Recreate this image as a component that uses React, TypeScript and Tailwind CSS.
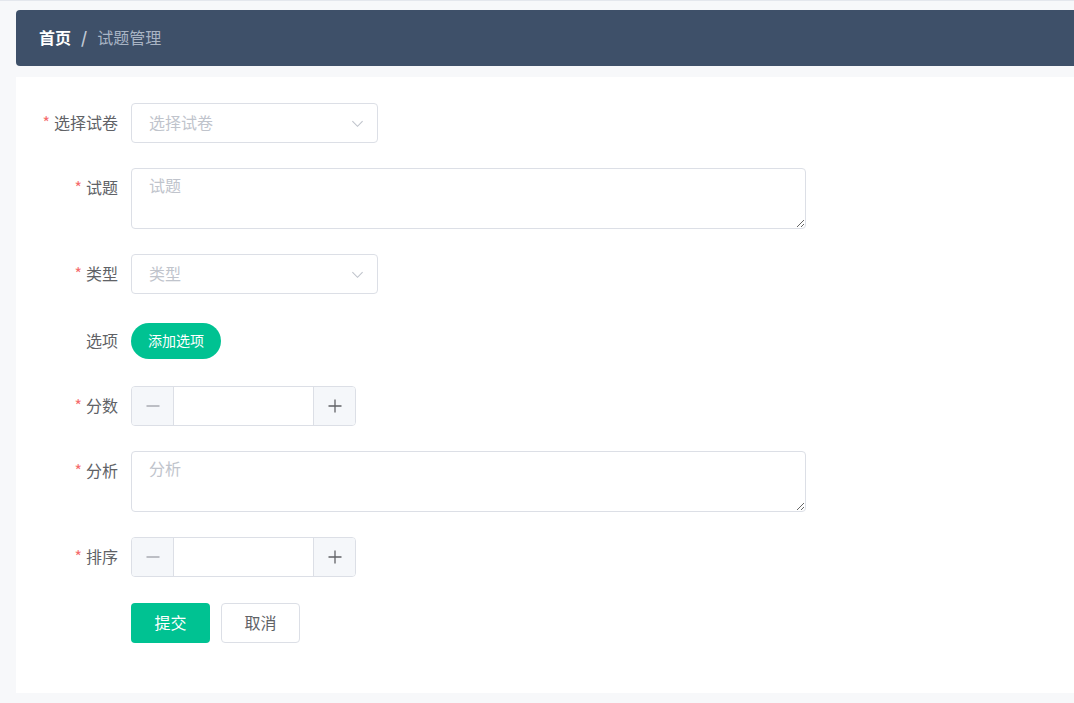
import React from "react";

const font = { fontFamily: '"Noto Sans CJK SC", "Noto Sans", sans-serif' };

function Label({ text, required = true, top = false }: { text: string; required?: boolean; top?: boolean }) {
  return (
    <div className={`w-[115px] shrink-0 pr-[13px] flex justify-end text-[16px] text-[#606266] ${top ? "items-start pt-[7px]" : "items-center pb-[2px]"}`}>
      {required && <span className="text-[#f56c6c] mr-[4px] text-[16px]">*</span>}
      <span>{text}</span>
    </div>
  );
}

function Select({ placeholder }: { placeholder: string }) {
  return (
    <div className="w-[247px] h-[40px] border border-[#dcdfe6] rounded-[4px] bg-white flex items-center justify-between pl-[17px] pr-[13px]">
      <span className="text-[16px] text-[#c0c4cc] pb-[2px]">{placeholder}</span>
      <svg width="13" height="13" viewBox="0 0 14 14" fill="none">
        <path d="M1.5 4.5 L7 10 L12.5 4.5" stroke="#c0c4cc" strokeWidth="1.2" />
      </svg>
    </div>
  );
}

function TextArea({ placeholder }: { placeholder: string }) {
  return (
    <textarea
      placeholder={placeholder}
      className="w-[675px] h-[61px] border border-[#dcdfe6] rounded-[4px] bg-white px-[17px] py-[4px] text-[16px] text-[#606266] placeholder:text-[#c0c4cc] outline-none block"
      style={font}
    />
  );
}

function NumberInput() {
  return (
    <div className="w-[225px] h-[40px] border border-[#dcdfe6] rounded-[4px] bg-white flex overflow-hidden">
      <div className="w-[42px] h-full bg-[#f5f7fa] border-r border-[#dcdfe6] flex items-center justify-center">
        <svg width="14" height="14" viewBox="0 0 14 14">
          <path d="M0.5 7 H13.5" stroke="#a8abb2" strokeWidth="1.3" />
        </svg>
      </div>
      <div className="flex-1" />
      <div className="w-[42px] h-full bg-[#f5f7fa] border-l border-[#dcdfe6] flex items-center justify-center">
        <svg width="14" height="14" viewBox="0 0 14 14">
          <path d="M0.5 7 H13.5 M7 0.5 V13.5" stroke="#606266" strokeWidth="1.3" />
        </svg>
      </div>
    </div>
  );
}

export default function App() {
  return (
    <div className="w-[1074px] h-[703px] overflow-hidden bg-[#f7f8fa] border-t border-[#e4e7ed]" style={font}>
      <div className="ml-[16px] mt-[9px] w-[1100px] h-[56px] bg-[#3e5069] rounded-l-[4px] flex items-center pl-[23px] pb-[2px]">
        <span className="text-white font-bold text-[16px]">首页</span>
        <span className="text-[#c0c8d4] font-bold text-[16px] mx-[10px]">/</span>
        <span className="text-[#a9b4c4] text-[16px]">试题管理</span>
      </div>
      <div className="ml-[16px] mt-[11px] w-[1100px] h-[616px] bg-white pt-[26px]">
        <div className="flex h-[40px]">
          <Label text="选择试卷" />
          <Select placeholder="选择试卷" />
        </div>
        <div className="flex mt-[25px]">
          <Label text="试题" top />
          <TextArea placeholder="试题" />
        </div>
        <div className="flex h-[40px] mt-[25px]">
          <Label text="类型" />
          <Select placeholder="类型" />
        </div>
        <div className="flex h-[40px] mt-[27px] items-center">
          <Label text="选项" required={false} />
          <button className="w-[90px] h-[36px] rounded-full bg-[#00c292] text-white text-[14px] pb-[1px]">添加选项</button>
        </div>
        <div className="flex h-[40px] mt-[25px]">
          <Label text="分数" />
          <NumberInput />
        </div>
        <div className="flex mt-[25px]">
          <Label text="分析" top />
          <TextArea placeholder="分析" />
        </div>
        <div className="flex h-[40px] mt-[25px]">
          <Label text="排序" />
          <NumberInput />
        </div>
        <div className="flex h-[40px] mt-[26px]">
          <div className="w-[115px] shrink-0" />
          <button className="w-[79px] h-[40px] rounded-[4px] bg-[#00c292] text-white text-[16px] pb-[2px]">提交</button>
          <button className="ml-[11px] w-[79px] h-[40px] rounded-[4px] bg-white border border-[#dcdfe6] text-[#606266] text-[16px] pb-[2px]">取消</button>
        </div>
      </div>
    </div>
  );
}
